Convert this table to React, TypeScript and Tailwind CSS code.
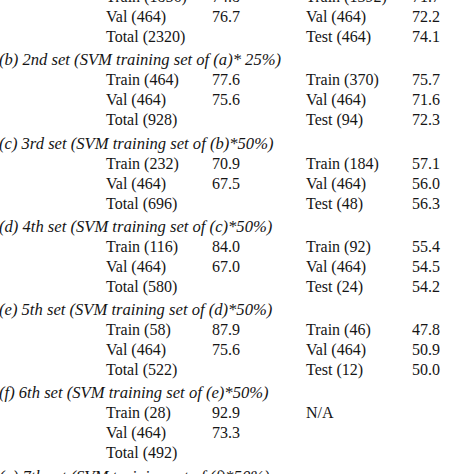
const groups: {
  heading: string | null;
  left: [string, string][];
  right: [string, string][] | null;
}[] = [
  {
    heading: null,
    left: [
      ["Train (1856)", "74.8"],
      ["Val (464)", "76.7"],
      ["Total (2320)", ""],
    ],
    right: [
      ["Train (1392)", "71.7"],
      ["Val (464)", "72.2"],
      ["Test (464)", "74.1"],
    ],
  },
  {
    heading: "(b) 2nd set (SVM training set of (a)* 25%)",
    left: [
      ["Train (464)", "77.6"],
      ["Val (464)", "75.6"],
      ["Total (928)", ""],
    ],
    right: [
      ["Train (370)", "75.7"],
      ["Val (464)", "71.6"],
      ["Test (94)", "72.3"],
    ],
  },
  {
    heading: "(c) 3rd set (SVM training set of (b)*50%)",
    left: [
      ["Train (232)", "70.9"],
      ["Val (464)", "67.5"],
      ["Total (696)", ""],
    ],
    right: [
      ["Train (184)", "57.1"],
      ["Val (464)", "56.0"],
      ["Test (48)", "56.3"],
    ],
  },
  {
    heading: "(d) 4th set (SVM training set of (c)*50%)",
    left: [
      ["Train (116)", "84.0"],
      ["Val (464)", "67.0"],
      ["Total (580)", ""],
    ],
    right: [
      ["Train (92)", "55.4"],
      ["Val (464)", "54.5"],
      ["Test (24)", "54.2"],
    ],
  },
  {
    heading: "(e) 5th set (SVM training set of (d)*50%)",
    left: [
      ["Train (58)", "87.9"],
      ["Val (464)", "75.6"],
      ["Total (522)", ""],
    ],
    right: [
      ["Train (46)", "47.8"],
      ["Val (464)", "50.9"],
      ["Test (12)", "50.0"],
    ],
  },
  {
    heading: "(f) 6th set (SVM training set of (e)*50%)",
    left: [
      ["Train (28)", "92.9"],
      ["Val (464)", "73.3"],
      ["Total (492)", ""],
    ],
    right: null,
  },
  {
    heading: "(g) 7th set (SVM training set of (f)*50%)",
    left: [],
    right: null,
  },
];

export default function App() {
  return (
    <div className="h-[474px] w-[474px] overflow-hidden bg-white font-['Liberation_Serif',serif] text-[16px] leading-5 text-[#151515]">
      <div className="mt-[-13px]">
        {groups.map((g, gi) => (
          <div key={gi}>
            {g.heading && (
              <div className="ml-[-1px] mt-[3.3px] h-5 whitespace-nowrap text-[16.6px] italic">{g.heading}</div>
            )}
            {g.left.map((row, ri) => {
              const r = g.right ? g.right[ri] : ri === 0 ? ["N/A", ""] : ["", ""];
              return (
                <div key={ri} className="flex h-5 whitespace-nowrap">
                  <div className="w-[212px] pl-[106px]">{row[0]}</div>
                  <div className="w-[94px]">{row[1]}</div>
                  <div className="w-[106px]">{r[0]}</div>
                  <div>{r[1]}</div>
                </div>
              );
            })}
          </div>
        ))}
      </div>
    </div>
  );
}
